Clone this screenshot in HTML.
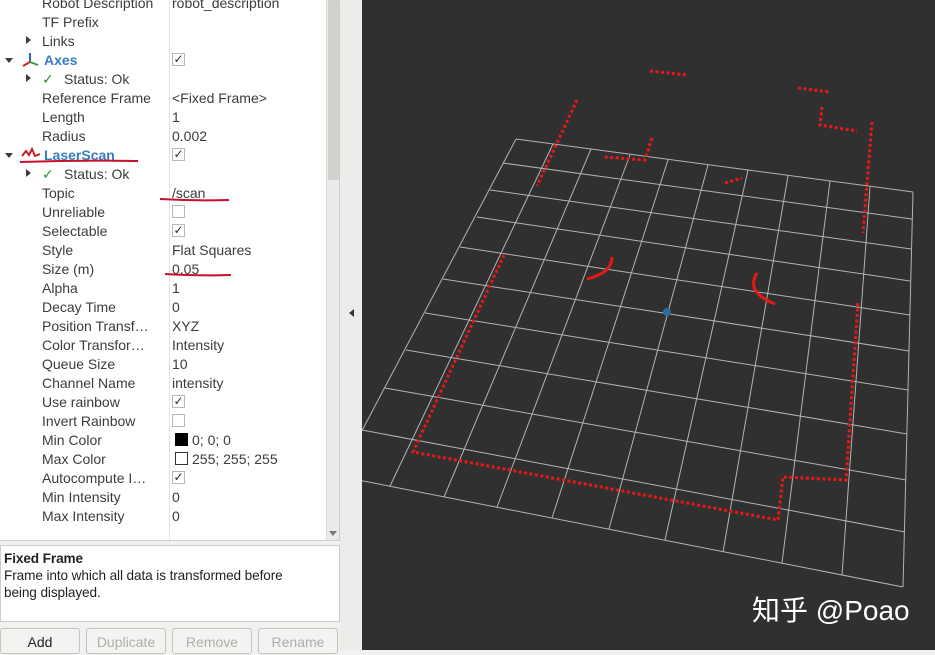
<!DOCTYPE html>
<html><head><meta charset="utf-8"><style>
*{margin:0;padding:0;box-sizing:border-box}
body{width:935px;height:650px;overflow:hidden;background:#f2f1f0;position:relative;font-family:"Liberation Sans","DejaVu Sans",sans-serif;font-size:14px;color:#3c3c3c}
.tree{position:absolute;left:0;top:0;width:340px;height:541px;background:#fff;border-bottom:1px solid #cfcdca;border-right:1px solid #cfcdca;overflow:hidden}
.r{position:absolute;height:19px;line-height:19px;white-space:nowrap}
.v{left:172px}
.sep{position:absolute;left:169px;top:0;width:1px;height:541px;background:#e4e2df}
.cb{position:absolute;left:172px;width:13px;height:13px;border:1px solid #b9b7b4;background:#fff;font-size:12px;line-height:11px;text-align:center;color:#2a2a2a;font-weight:bold}
.arr{position:absolute;width:0;height:0}
.ar{border-top:4px solid transparent;border-bottom:4px solid transparent;border-left:5px solid #3c3c3c}
.ad{border-left:4px solid transparent;border-right:4px solid transparent;border-top:5px solid #3c3c3c}
.blue{color:#3a7cc0;font-weight:bold}
.chk{color:#2e8b2e;font-weight:bold}
.btn{position:absolute;top:628px;width:80px;height:26px;border:1px solid #c4c2bf;border-radius:3px;background:#f4f3f2;text-align:center;line-height:26px;font-size:14px;color:#b0aeab}
</style></head><body>
<div class="tree">
<div class="sep"></div>
<div class="r" style="left:42px;top:-6px">Robot Description</div><div class="r v" style="top:-6px">robot_description</div>
<div class="r" style="left:42px;top:13px">TF Prefix</div>
<div class="arr ar" style="left:26px;top:36px"></div><div class="r" style="left:42px;top:32px">Links</div>
<div class="arr ad" style="left:5px;top:58px"></div>
<svg style="position:absolute;left:21px;top:51px" width="18" height="16"><line x1="9" y1="2" x2="9" y2="11" stroke="#3a5fcc" stroke-width="2"/><line x1="9" y1="11" x2="2" y2="15" stroke="#d02020" stroke-width="2"/><line x1="9" y1="11" x2="17" y2="14" stroke="#2da02d" stroke-width="2"/></svg>
<div class="r blue" style="left:44px;top:51px">Axes</div><div class="cb" style="top:53px">✓</div>
<div class="arr ar" style="left:26px;top:74px"></div><div class="r chk" style="left:42px;top:70px">✓</div><div class="r" style="left:64px;top:70px">Status: Ok</div>
<div class="r" style="left:42px;top:89px">Reference Frame</div><div class="r v" style="top:89px">&lt;Fixed Frame&gt;</div>
<div class="r" style="left:42px;top:108px">Length</div><div class="r v" style="top:108px">1</div>
<div class="r" style="left:42px;top:127px">Radius</div><div class="r v" style="top:127px">0.002</div>
<div class="arr ad" style="left:5px;top:153px"></div>
<svg style="position:absolute;left:21px;top:147px" width="20" height="12"><polyline points="1,9 5,4 8,8 11,2 14,9 19,7" fill="none" stroke="#c82020" stroke-width="2"/></svg>
<div class="r blue" style="left:44px;top:146px">LaserScan</div><div class="cb" style="top:148px">✓</div>
<div class="arr ar" style="left:26px;top:169px"></div><div class="r chk" style="left:42px;top:165px">✓</div><div class="r" style="left:64px;top:165px">Status: Ok</div>
<div class="r" style="left:42px;top:184px">Topic</div><div class="r v" style="top:184px">/scan</div>
<div class="r" style="left:42px;top:203px">Unreliable</div><div class="cb" style="top:205px"></div>
<div class="r" style="left:42px;top:222px">Selectable</div><div class="cb" style="top:224px">✓</div>
<div class="r" style="left:42px;top:241px">Style</div><div class="r v" style="top:241px">Flat Squares</div>
<div class="r" style="left:42px;top:260px">Size (m)</div><div class="r v" style="top:260px">0.05</div>
<div class="r" style="left:42px;top:279px">Alpha</div><div class="r v" style="top:279px">1</div>
<div class="r" style="left:42px;top:298px">Decay Time</div><div class="r v" style="top:298px">0</div>
<div class="r" style="left:42px;top:317px">Position Transf…</div><div class="r v" style="top:317px">XYZ</div>
<div class="r" style="left:42px;top:336px">Color Transfor…</div><div class="r v" style="top:336px">Intensity</div>
<div class="r" style="left:42px;top:355px">Queue Size</div><div class="r v" style="top:355px">10</div>
<div class="r" style="left:42px;top:374px">Channel Name</div><div class="r v" style="top:374px">intensity</div>
<div class="r" style="left:42px;top:393px">Use rainbow</div><div class="cb" style="top:395px">✓</div>
<div class="r" style="left:42px;top:412px">Invert Rainbow</div><div class="cb" style="top:414px"></div>
<div class="r" style="left:42px;top:431px">Min Color</div><div style="position:absolute;left:175px;top:433px;width:13px;height:13px;background:#000"></div><div class="r" style="left:192px;top:431px">0; 0; 0</div>
<div class="r" style="left:42px;top:450px">Max Color</div><div style="position:absolute;left:175px;top:452px;width:13px;height:13px;background:#fff;border:1px solid #333"></div><div class="r" style="left:192px;top:450px">255; 255; 255</div>
<div class="r" style="left:42px;top:469px">Autocompute I…</div><div class="cb" style="top:471px">✓</div>
<div class="r" style="left:42px;top:488px">Min Intensity</div><div class="r v" style="top:488px">0</div>
<div class="r" style="left:42px;top:507px">Max Intensity</div><div class="r v" style="top:507px">0</div>
<div style="position:absolute;left:326px;top:0;width:14px;height:541px;background:#ecebe9;border-left:1px solid #dcdad7"></div>
<div style="position:absolute;left:328px;top:0;width:11px;height:180px;background:#d3d1ce;border-radius:2px"></div>
<div class="arr ad" style="left:329px;top:531px;border-top-color:#777"></div>
</div>
<svg style="position:absolute;left:0;top:0" width="340" height="541"><g stroke="#c8102e" stroke-width="2" fill="none"><path d="M20 162 Q80 160 138 161"/><path d="M160 199 Q195 201 229 200"/><path d="M165 274 Q200 276 231 275"/></g></svg>
<div style="position:absolute;left:0;top:545px;width:340px;height:77px;background:#fff;border:1px solid #cfcdca;padding:4px 3px;line-height:17px;color:#222;font-size:13.6px;letter-spacing:-0.1px"><b>Fixed Frame</b><br>Frame into which all data is transformed before<br>being displayed.</div>
<div class="btn" style="left:0;color:#222">Add</div>
<div class="btn" style="left:86px">Duplicate</div>
<div class="btn" style="left:172px">Remove</div>
<div class="btn" style="left:258px">Rename</div>
<div style="position:absolute;left:340px;top:0;width:22px;height:650px;background:#edecea"></div>
<div class="arr" style="left:349px;top:309px;border-top:4px solid transparent;border-bottom:4px solid transparent;border-right:5px solid #333"></div>
<svg style="position:absolute;left:362px;top:0" width="573" height="650" viewBox="362 0 573 650">
<rect x="362" y="0" width="573" height="650" fill="#303030"/>
<g stroke="#b4b4b4" stroke-width="1" fill="none">
<line x1="516" y1="139" x2="338" y2="476"/><line x1="553" y1="144" x2="390" y2="486"/><line x1="591" y1="149" x2="444" y2="497"/><line x1="630" y1="155" x2="497" y2="507"/><line x1="668" y1="160" x2="552" y2="518"/><line x1="708" y1="165" x2="609" y2="529"/><line x1="748" y1="170" x2="665" y2="540"/><line x1="788" y1="176" x2="723" y2="552"/><line x1="830" y1="181" x2="782" y2="563"/><line x1="870" y1="187" x2="842" y2="575"/><line x1="913" y1="192" x2="903" y2="587"/>
<line x1="516" y1="139" x2="913" y2="192"/><line x1="503" y1="163" x2="912" y2="219"/><line x1="490" y1="190" x2="911" y2="249"/><line x1="477" y1="217" x2="910" y2="281"/><line x1="460" y1="247" x2="910" y2="315"/><line x1="443" y1="279" x2="909" y2="351"/><line x1="425" y1="313" x2="908" y2="390"/><line x1="406" y1="350" x2="907" y2="434"/><line x1="385" y1="388" x2="906" y2="480"/><line x1="362" y1="430" x2="905" y2="532"/><line x1="338" y1="476" x2="903" y2="587"/>
</g>
<g stroke="#e81818" stroke-width="3" fill="none" stroke-dasharray="3 2.5">
<polyline points="504,255 413,452 644,495 778,520 783,477 846,480 858,302"/>
<polyline points="872,122 863,233"/>
<polyline points="577,100 537,186"/>
<polyline points="650,71 687,75"/>
<polyline points="798,88 830,92"/>
<polyline points="822,107 820,125 857,131"/>
<polyline points="652,138 645,160 605,157"/>
<polyline points="725,183 742,178"/>
</g>
<g stroke="#e81818" stroke-width="3" fill="none">
<path d="M612 257 Q612 273 587 279"/>
<path d="M757 273 Q745 292 775 304"/>
</g>
<circle cx="667" cy="312" r="4" fill="#2a6f96"/>
<text x="752" y="620" fill="#fff" font-size="28" font-family="'Liberation Sans','Noto Sans CJK SC',sans-serif">知乎 @Poao</text>
</svg>
</body></html>
